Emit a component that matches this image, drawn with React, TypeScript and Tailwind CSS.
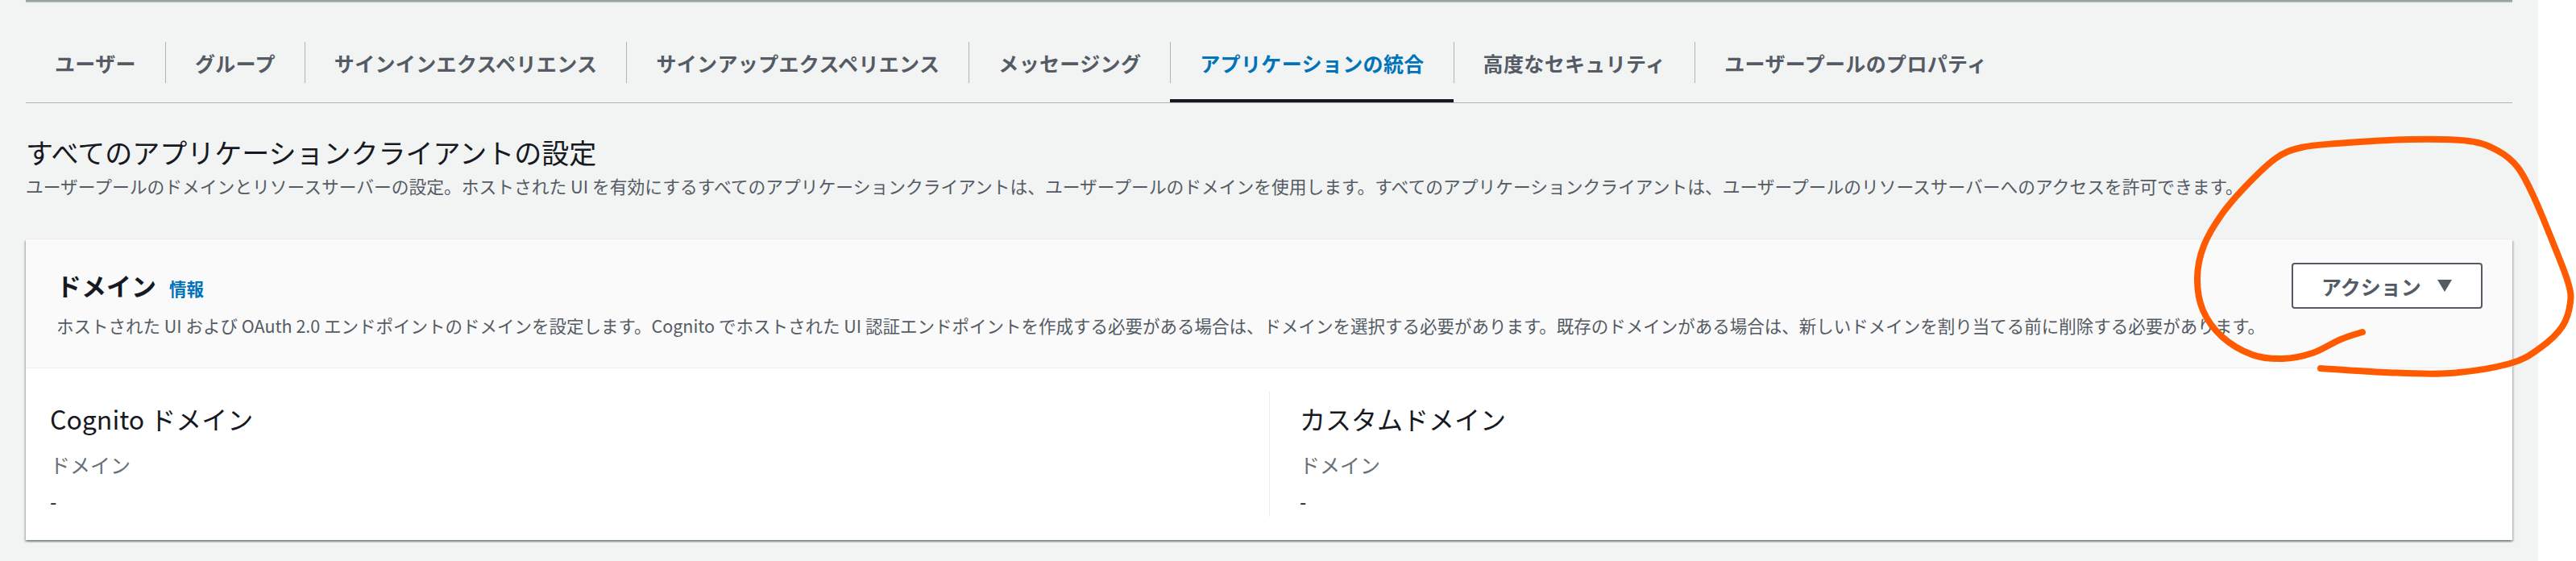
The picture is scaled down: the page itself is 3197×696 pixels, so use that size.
import React from "react";

const tabs = [
  "ユーザー",
  "グループ",
  "サインインエクスペリエンス",
  "サインアップエクスペリエンス",
  "メッセージング",
  "アプリケーションの統合",
  "高度なセキュリティ",
  "ユーザープールのプロパティ",
];

const pts: [number, number][] = [
  [2932, 412], [2905, 421], [2870, 438], [2833, 445], [2795, 440], [2758, 418],
  [2734, 385], [2727, 345], [2735, 305], [2758, 265], [2790, 228], [2825, 196],
  [2856, 183], [2900, 178], [2990, 173], [3064, 175], [3100, 187], [3125, 208],
  [3145, 245], [3170, 305], [3187, 350], [3190, 375], [3180, 405], [3152, 432],
  [3115, 451], [3040, 463], [2960, 462], [2880, 457],
];

function smoothPath(p: [number, number][]) {
  let d = `M${p[0][0]} ${p[0][1]}`;
  for (let i = 0; i < p.length - 1; i++) {
    const p0 = p[i - 1] || p[i];
    const p1 = p[i];
    const p2 = p[i + 1];
    const p3 = p[i + 2] || p2;
    const c1x = p1[0] + (p2[0] - p0[0]) / 6;
    const c1y = p1[1] + (p2[1] - p0[1]) / 6;
    const c2x = p2[0] - (p3[0] - p1[0]) / 6;
    const c2y = p2[1] - (p3[1] - p1[1]) / 6;
    d += ` C${c1x} ${c1y} ${c2x} ${c2y} ${p2[0]} ${p2[1]}`;
  }
  return d;
}

export default function App() {
  return (
    <div
      className="relative w-[3197px] h-[696px] bg-white overflow-hidden"
      style={{ fontFamily: '"Noto Sans CJK JP", "Noto Sans", sans-serif' }}
    >
      <div className="w-[3150px] h-full bg-[#f2f3f3] px-[32px]">
        {/* bottom edge of previous card */}
        <div className="h-[2px] bg-[#97a3a4] shadow-[0_1px_1px_0_rgba(0,28,36,0.25)]" />

        {/* Tabs */}
        <div className="flex border-b border-[#aab7b8] h-[126px]">
          {tabs.map((t, i) => {
            const active = i === 5;
            return (
              <div key={t} className="relative flex items-end pb-[24px]">
                <span
                  className={`flex items-center h-[51px] px-[36px] text-[25px] leading-[32px] tracking-[0.35px] font-bold whitespace-nowrap ${
                    i === 0 ? "" : "border-l border-[#aab7b8]"
                  } ${active ? "text-[#0073bb]" : "text-[#545b64]"}`}
                >
                  {t}
                </span>
                {active && (
                  <div className="absolute left-0 right-0 bottom-0 h-[4px] bg-[#16191f]" />
                )}
              </div>
            );
          })}
        </div>

        {/* Section heading */}
        <h2 className="mt-[39px] text-[34px] leading-[44px] text-[#16191f] font-normal whitespace-nowrap">
          すべてのアプリケーションクライアントの設定
        </h2>
        <p className="mt-[5px] text-[21.75px] leading-[30px] text-[#545b64] whitespace-nowrap">
          ユーザープールのドメインとリソースサーバーの設定。ホストされた UI を有効にするすべてのアプリケーションクライアントは、ユーザープールのドメインを使用します。すべてのアプリケーションクライアントは、ユーザープールのリソースサーバーへのアクセスを許可できます。
        </p>

        {/* Card */}
        <div className="mt-[51px] bg-white shadow-[0_2px_2px_0_rgba(0,28,36,0.3),2px_2px_2px_0_rgba(0,28,36,0.15),-2px_2px_2px_0_rgba(0,28,36,0.15),0_0_1px_0_rgba(0,28,36,0.15)]">
          <div className="bg-[#fafafa] border-b border-[#eaeded] pl-[38px] pr-[37px] pt-[29px] pb-[37px]">
            <div className="flex items-center justify-between">
              <div className="flex items-baseline">
                <span className="text-[31px] leading-[40px] font-bold text-[#16191f]">ドメイン</span>
                <span className="ml-[16px] text-[21.5px] font-bold text-[#0073bb]">情報</span>
              </div>
              <button className="flex items-center h-[57px] w-[237px] pl-[35px] border-2 border-[#545b64] rounded-[4px] bg-white">
                <span className="text-[25px] leading-[32px] font-bold text-[#545b64]">アクション</span>
                <svg className="ml-[20px]" width="18" height="15" viewBox="0 0 18 15">
                  <path d="M0 0 H18 L9 15 Z" fill="#545b64" />
                </svg>
              </button>
            </div>
            <p className="mt-[6px] text-[21.5px] leading-[30px] text-[#545b64] whitespace-nowrap">
              ホストされた UI および OAuth 2.0 エンドポイントのドメインを設定します。Cognito でホストされた UI 認証エンドポイントを作成する必要がある場合は、ドメインを選択する必要があります。既存のドメインがある場合は、新しいドメインを割り当てる前に削除する必要があります。
            </p>
          </div>
          <div className="px-[30px] pt-[29px] pb-[29px]">
            <div className="grid grid-cols-2">
              <div className="flex flex-col pt-[13px] pb-[3px]">
                <div className="text-[32px] leading-[40px] text-[#16191f]">Cognito ドメイン</div>
                <div className="mt-[21px] text-[25px] leading-[32px] text-[#687078]">ドメイン</div>
                <div className="mt-[14px] text-[24px] leading-[32px] text-[#16191f]">-</div>
              </div>
              <div className="flex flex-col pt-[13px] pb-[3px] pl-[37px] border-l border-[#eaeded]">
                <div className="text-[32px] leading-[40px] text-[#16191f]">カスタムドメイン</div>
                <div className="mt-[21px] text-[25px] leading-[32px] text-[#687078]">ドメイン</div>
                <div className="mt-[14px] text-[24px] leading-[32px] text-[#16191f]">-</div>
              </div>
            </div>
          </div>
        </div>
      </div>

      {/* hand-drawn annotation */}
      <svg
        className="absolute left-0 top-0 pointer-events-none"
        width="3197"
        height="696"
        viewBox="0 0 3197 696"
      >
        <path
          d={smoothPath(pts)}
          fill="none"
          stroke="#ff5a00"
          strokeWidth="8"
          strokeLinecap="round"
          strokeLinejoin="round"
        />
      </svg>
    </div>
  );
}
